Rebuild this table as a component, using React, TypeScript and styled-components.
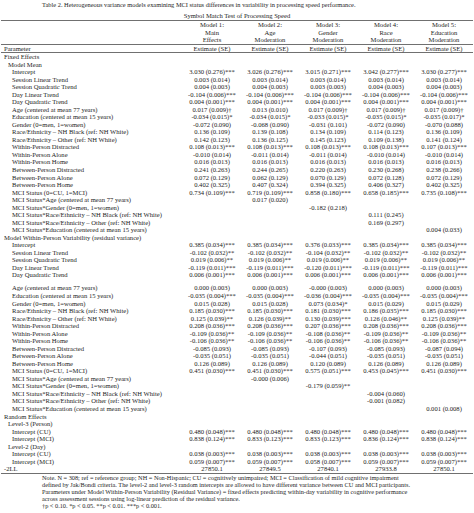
import React from 'react';
import styled, { createGlobalStyle } from 'styled-components';

const GlobalStyle = createGlobalStyle`
  html, body {
    margin: 0;
    padding: 0;
    background: #fff;
  }
  body {
    font-family: "Liberation Serif", "Times New Roman", serif;
    color: #1d1d1d;
  }
`;

const Page = styled.div`
  width: 474px;
  height: 513px;
  overflow: hidden;
  font-size: 6.6px;
`;

const Title = styled.div`
  padding: 1px 0 0 42px;
  line-height: 8px;
  font-size: 6.4px;
  white-space: nowrap;
`;

const Table = styled.table`
  width: 472px;
  margin-left: 1px;
  border-collapse: collapse;
  table-layout: fixed;
`;

const Row = styled.tr<{ $rule?: boolean; $gap?: boolean }>`
  border-bottom: ${p => (p.$rule ? '1px solid #707070' : 'none')};
  & > td,
  & > th {
    padding-top: ${p => (p.$gap ? '5.5px' : '0')};
  }
`;

const Banner = styled.th`
  font-weight: normal;
  text-align: center;
  line-height: 7.5px;
  padding: 2.5px 0 1px !important;
`;

const ModelHead = styled.th`
  font-weight: normal;
  text-align: center;
  line-height: 7.5px;
  padding: 0;
  white-space: pre-line;
`;

const Label = styled.td<{ $level: number }>`
  padding: 0 0 0 ${p => 3 + p.$level * 4}px;
  line-height: 7.53px;
  white-space: nowrap;
  text-align: left;
`;

const Cell = styled.td`
  padding: 0;
  line-height: 7.53px;
  white-space: nowrap;
  text-align: center;
`;

const Note = styled.div`
  padding: 0 0 0 42px;
  line-height: 7.1px;
  font-size: 6.3px;
  white-space: nowrap;
`;

type Line = {
  label: string;
  level: number;
  values?: (string | null)[];
  gap?: boolean;
  rule?: boolean;
};

const all = (v: string) => [v, v, v, v, v];
const only = (i: number, v: string) => [0, 1, 2, 3, 4].map(k => (k === i ? v : null));

const rows: Line[] = [
  { label: 'Fixed Effects', level: 0 },
  { label: 'Model Mean', level: 1 },
  { label: 'Intercept', level: 2, values: ['3.030 (0.276)***', '3.026 (0.276)***', '3.015 (0.271)***', '3.042 (0.277)***', '3.030 (0.277)***'] },
  { label: 'Session Linear Trend', level: 2, values: all('0.003 (0.014)') },
  { label: 'Session Quadratic Trend', level: 2, values: ['0.004 (0.003)', '0.004 (0.003)', '0.003 (0.003)', '0.004 (0.003)', '0.004 (0.003)'] },
  { label: 'Day Linear Trend', level: 2, values: all('-0.104 (0.006)***') },
  { label: 'Day Quadratic Trend', level: 2, values: all('0.004 (0.001)***') },
  { label: 'Age (centered at mean 77 years)', level: 2, values: ['0.017 (0.009)†', '0.013 (0.010)', '0.017 (0.009)†', '0.017 (0.009)†', '0.017 (0.009)†'] },
  { label: 'Education (centered at mean 15 years)', level: 2, values: ['-0.034 (0.015)*', '-0.034 (0.015)*', '-0.033 (0.015)*', '-0.035 (0.015)*', '-0.035 (0.017)*'] },
  { label: 'Gender (0=men, 1=women)', level: 2, values: ['-0.072 (0.090)', '-0.068 (0.090)', '-0.031 (0.101)', '-0.072 (0.090)', '-0.070 (0.088)'] },
  { label: 'Race/Ethnicity – NH Black (ref: NH White)', level: 2, values: ['0.136 (0.109)', '0.139 (0.108)', '0.134 (0.109)', '0.114 (0.123)', '0.136 (0.109)'] },
  { label: 'Race/Ethnicity – Other (ref: NH White)', level: 2, values: ['0.142 (0.123)', '0.136 (0.125)', '0.145 (0.123)', '0.109 (0.138)', '0.141 (0.124)'] },
  { label: 'Within-Person Distracted', level: 2, values: ['0.108 (0.013)***', '0.108 (0.013)***', '0.108 (0.013)***', '0.108 (0.013)***', '0.107 (0.013)***'] },
  { label: 'Within-Person Alone', level: 2, values: ['-0.010 (0.014)', '-0.011 (0.014)', '-0.011 (0.014)', '-0.010 (0.014)', '-0.010 (0.014)'] },
  { label: 'Within-Person Home', level: 2, values: all('0.016 (0.013)') },
  { label: 'Between-Person Distracted', level: 2, values: ['0.241 (0.263)', '0.244 (0.265)', '0.220 (0.263)', '0.230 (0.268)', '0.238 (0.266)'] },
  { label: 'Between-Person Alone', level: 2, values: ['0.072 (0.129)', '0.062 (0.129)', '0.070 (0.129)', '0.072 (0.128)', '0.072 (0.129)'] },
  { label: 'Between-Person Home', level: 2, values: ['0.402 (0.325)', '0.407 (0.324)', '0.394 (0.325)', '0.406 (0.327)', '0.402 (0.325)'] },
  { label: 'MCI Status (0=CU, 1=MCI)', level: 2, values: ['0.734 (0.109)***', '0.719 (0.109)***', '0.858 (0.180)***', '0.658 (0.185)***', '0.735 (0.108)***'] },
  { label: 'MCI Status*Age (centered at mean 77 years)', level: 2, values: only(1, '0.017 (0.020)') },
  { label: 'MCI Status*Gender (0=men, 1=women)', level: 2, values: only(2, '-0.182 (0.218)') },
  { label: 'MCI Status*Race/Ethnicity – NH Black (ref: NH White)', level: 2, values: only(3, '0.111 (0.245)') },
  { label: 'MCI Status*Race/Ethnicity – Other (ref: NH White)', level: 2, values: only(3, '0.169 (0.297)') },
  { label: 'MCI Status*Education (centered at mean 15 years)', level: 2, values: only(4, '0.004 (0.033)') },
  { label: 'Model Within-Person Variability (residual variance)', level: 0 },
  { label: 'Intercept', level: 2, values: ['0.385 (0.034)***', '0.385 (0.034)***', '0.376 (0.033)***', '0.385 (0.034)***', '0.385 (0.034)***'] },
  { label: 'Session Linear Trend', level: 2, values: ['-0.102 (0.032)**', '-0.102 (0.032)**', '-0.104 (0.032)**', '-0.102 (0.032)**', '-0.102 (0.032)**'] },
  { label: 'Session Quadratic Trend', level: 2, values: all('0.019 (0.006)**') },
  { label: 'Day Linear Trend', level: 2, values: ['-0.119 (0.011)***', '-0.119 (0.011)***', '-0.120 (0.011)***', '-0.119 (0.011)***', '-0.119 (0.011)***'] },
  { label: 'Day Quadratic Trend', level: 2, values: all('0.006 (0.001)***') },
  { label: 'Age (centered at mean 77 years)', level: 2, gap: true, values: ['0.000 (0.003)', '0.000 (0.003)', '-0.000 (0.003)', '0.000 (0.003)', '0.000 (0.003)'] },
  { label: 'Education (centered at mean 15 years)', level: 2, values: ['-0.035 (0.004)***', '-0.035 (0.004)***', '-0.036 (0.004)***', '-0.035 (0.004)***', '-0.035 (0.004)***'] },
  { label: 'Gender (0=men, 1=women)', level: 2, values: ['0.015 (0.028)', '0.015 (0.028)', '0.073 (0.034)*', '0.015 (0.029)', '0.015 (0.029)'] },
  { label: 'Race/Ethnicity – NH Black (ref: NH White)', level: 2, values: ['0.185 (0.030)***', '0.185 (0.030)***', '0.181 (0.030)***', '0.186 (0.035)***', '0.185 (0.030)***'] },
  { label: 'Race/Ethnicity – Other (ref: NH White)', level: 2, values: ['0.125 (0.039)**', '0.126 (0.039)**', '0.130 (0.039)***', '0.126 (0.046)**', '0.125 (0.039)**'] },
  { label: 'Within-Person Distracted', level: 2, values: ['0.208 (0.036)***', '0.208 (0.036)***', '0.207 (0.036)***', '0.208 (0.036)***', '0.208 (0.036)***'] },
  { label: 'Within-Person Alone', level: 2, values: ['-0.109 (0.036)**', '-0.109 (0.036)**', '-0.108 (0.036)**', '-0.109 (0.036)**', '-0.109 (0.036)**'] },
  { label: 'Within-Person Home', level: 2, values: all('-0.106 (0.036)**') },
  { label: 'Between-Person Distracted', level: 2, values: ['-0.085 (0.093)', '-0.085 (0.093)', '-0.107 (0.093)', '-0.085 (0.093)', '-0.087 (0.094)'] },
  { label: 'Between-Person Alone', level: 2, values: ['-0.035 (0.051)', '-0.035 (0.051)', '-0.044 (0.051)', '-0.035 (0.051)', '-0.035 (0.051)'] },
  { label: 'Between-Person Home', level: 2, values: ['0.126 (0.089)', '0.126 (0.089)', '0.120 (0.089)', '0.126 (0.089)', '0.126 (0.089)'] },
  { label: 'MCI Status (0=CU, 1=MCI)', level: 2, values: ['0.451 (0.030)***', '0.451 (0.030)***', '0.575 (0.051)***', '0.453 (0.045)***', '0.451 (0.030)***'] },
  { label: 'MCI Status*Age (centered at mean 77 years)', level: 2, values: only(1, '-0.000 (0.006)') },
  { label: 'MCI Status*Gender (0=men, 1=women)', level: 2, values: only(2, '-0.179 (0.059)**') },
  { label: 'MCI Status*Race/Ethnicity – NH Black (ref: NH White)', level: 2, values: only(3, '-0.004 (0.060)') },
  { label: 'MCI Status*Race/Ethnicity – Other (ref: NH White)', level: 2, values: only(3, '-0.001 (0.082)') },
  { label: 'MCI Status*Education (centered at mean 15 years)', level: 2, values: only(4, '0.001 (0.008)') },
  { label: 'Random Effects', level: 0 },
  { label: 'Level-3 (Person)', level: 1 },
  { label: 'Intercept (CU)', level: 2, values: all('0.480 (0.048)***') },
  { label: 'Intercept (MCI)', level: 2, values: ['0.838 (0.124)***', '0.833 (0.123)***', '0.833 (0.123)***', '0.836 (0.124)***', '0.838 (0.124)***'] },
  { label: 'Level-2 (Day)', level: 1 },
  { label: 'Intercept (CU)', level: 2, values: all('0.038 (0.003)***') },
  { label: 'Intercept (MCI)', level: 2, values: ['0.059 (0.007)***', '0.059 (0.007)***', '0.058 (0.007)***', '0.059 (0.007)***', '0.059 (0.007)***'] },
  { label: '-2LL', level: 0, rule: true, values: ['27850.1', '27849.5', '27840.1', '27933.8', '27850.1'] },
];

const models = [
  'Model 1:\nMain\nEffects',
  'Model 2:\nAge\nModeration',
  'Model 3:\nGender\nModeration',
  'Model 4:\nRace\nModeration',
  'Model 5:\nEducation\nModeration',
];

const notes = [
  'Note. N = 308; ref = reference group; NH = Non-Hispanic; CU = cognitively unimpaired; MCI = Classification of mild cognitive impairment',
  'defined by Jak/Bondi criteria. The level-2 and level-3 random intercepts are allowed to have different variance between CU and MCI participants.',
  'Parameters under Model Within-Person Variability (Residual Variance) = fixed effects predicting within-day variability in cognitive performance',
  'across assessment sessions using log-linear prediction of the residual variance.',
  '†p < 0.10. *p < 0.05. **p < 0.01. ***p < 0.001.',
];

export default function App() {
  return (
    <Page>
      <GlobalStyle />
      <Title>
        Table 2. Heterogeneous variance models examining MCI status differences in variability in processing speed performance.
      </Title>
      <Table>
        <colgroup>
          <col style={{ width: 182 }} />
          <col />
          <col />
          <col />
          <col />
          <col />
        </colgroup>
        <thead>
          <Row $rule>
            <Banner colSpan={6}>Symbol Match Test of Processing Speed</Banner>
          </Row>
          <Row $rule>
            <ModelHead />
            {models.map(m => (
              <ModelHead key={m}>{m}</ModelHead>
            ))}
          </Row>
          <Row $rule>
            <Label $level={0}>Parameter</Label>
            {models.map(m => (
              <Cell key={m}>Estimate (SE)</Cell>
            ))}
          </Row>
        </thead>
        <tbody>
          {rows.map((r, i) => (
            <Row key={i} $gap={r.gap} $rule={r.rule}>
              <Label $level={r.level}>{r.label}</Label>
              {(r.values ?? [null, null, null, null, null]).map((v, k) => (
                <Cell key={k}>{v ?? ''}</Cell>
              ))}
            </Row>
          ))}
        </tbody>
      </Table>
      {notes.map(n => (
        <Note key={n}>{n}</Note>
      ))}
    </Page>
  );
}
